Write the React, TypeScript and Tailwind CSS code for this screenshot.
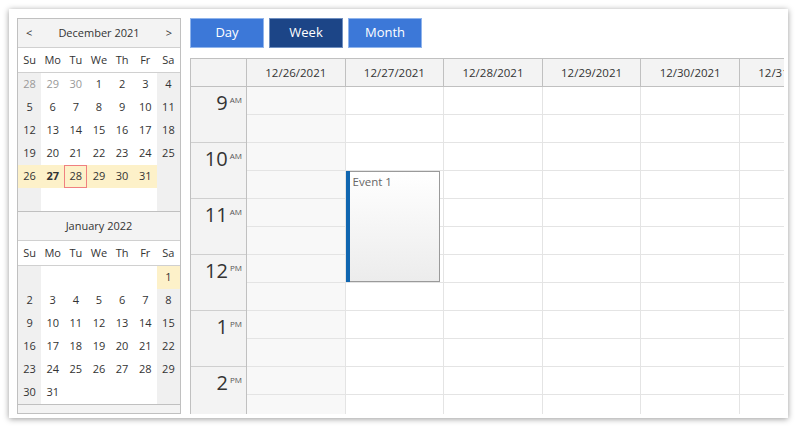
import React from 'react'

type Cell = { d: string; other?: boolean; sel?: boolean; bold?: boolean; today?: boolean }

const dayNames = ['Su', 'Mo', 'Tu', 'We', 'Th', 'Fr', 'Sa']

const december: Cell[][] = [
  [{ d: '28', other: true }, { d: '29', other: true }, { d: '30', other: true }, { d: '1' }, { d: '2' }, { d: '3' }, { d: '4' }],
  [{ d: '5' }, { d: '6' }, { d: '7' }, { d: '8' }, { d: '9' }, { d: '10' }, { d: '11' }],
  [{ d: '12' }, { d: '13' }, { d: '14' }, { d: '15' }, { d: '16' }, { d: '17' }, { d: '18' }],
  [{ d: '19' }, { d: '20' }, { d: '21' }, { d: '22' }, { d: '23' }, { d: '24' }, { d: '25' }],
  [
    { d: '26', sel: true },
    { d: '27', sel: true, bold: true },
    { d: '28', sel: true, today: true },
    { d: '29', sel: true },
    { d: '30', sel: true },
    { d: '31', sel: true },
    { d: '' },
  ],
  [{ d: '' }, { d: '' }, { d: '' }, { d: '' }, { d: '' }, { d: '' }, { d: '' }],
]

const january: Cell[][] = [
  [{ d: '' }, { d: '' }, { d: '' }, { d: '' }, { d: '' }, { d: '' }, { d: '1', sel: true }],
  [{ d: '2' }, { d: '3' }, { d: '4' }, { d: '5' }, { d: '6' }, { d: '7' }, { d: '8' }],
  [{ d: '9' }, { d: '10' }, { d: '11' }, { d: '12' }, { d: '13' }, { d: '14' }, { d: '15' }],
  [{ d: '16' }, { d: '17' }, { d: '18' }, { d: '19' }, { d: '20' }, { d: '21' }, { d: '22' }],
  [{ d: '23' }, { d: '24' }, { d: '25' }, { d: '26' }, { d: '27' }, { d: '28' }, { d: '29' }],
  [{ d: '30' }, { d: '31' }, { d: '' }, { d: '' }, { d: '' }, { d: '' }, { d: '' }],
]

const columns = ['12/26/2021', '12/27/2021', '12/28/2021', '12/29/2021', '12/30/2021', '12/31/2021']

const hours: [string, string][] = [
  ['9', 'AM'],
  ['10', 'AM'],
  ['11', 'AM'],
  ['12', 'PM'],
  ['1', 'PM'],
  ['2', 'PM'],
]

function Month({ title, rows, arrows }: { title: string; rows: Cell[][]; arrows?: boolean }) {
  return (
    <div className="border-b border-[#c0c0c0] bg-white">
      <div className="h-[29px] flex items-center justify-between px-[8px] bg-[#f3f3f3] border-b border-[#d0d0d0] text-[#333]">
        <span className="w-[10px]">{arrows ? '<' : ''}</span>
        <span>{title}</span>
        <span className="w-[10px] text-right">{arrows ? '>' : ''}</span>
      </div>
      <div className="grid grid-cols-7 h-[25px] border-b border-[#d0d0d0] items-center text-center text-[#333]">
        {dayNames.map((n) => (
          <div key={n}>{n}</div>
        ))}
      </div>
      {rows.map((row, ri) => (
        <div key={ri} className="grid grid-cols-7">
          {row.map((c, ci) => {
            const weekend = ci === 0 || ci === 6
            const bg = c.sel ? 'bg-[#fdf1c9]' : weekend ? 'bg-[#f0f0f0]' : 'bg-white'
            return (
              <div
                key={ci}
                className={`h-[23px] flex items-center justify-center ${bg} ${c.other ? 'text-[#999]' : 'text-[#333]'} ${c.bold ? 'font-bold' : ''} ${c.today ? 'border border-[#f08080]' : ''}`}
              >
                {c.d}
              </div>
            )
          })}
        </div>
      ))}
    </div>
  )
}

export default function App() {
  return (
    <div className="w-[798px] h-[428px] bg-white pt-[9px] pl-[9px] font-['Open_Sans',sans-serif]">
      <div className="w-[779px] h-[409px] bg-white shadow-[0_1px_6px_rgba(0,0,0,0.4)] flex gap-[9px] pt-[9px] pl-[8px] pr-[4px] pb-[4px]">
        {/* navigator */}
        <div className="w-[164px] h-full shrink-0 border border-[#c0c0c0] bg-[#f3f3f3] overflow-hidden text-[11px]">
          <Month title="December 2021" rows={december} arrows />
          <Month title="January 2022" rows={january} />
        </div>

        {/* scheduler */}
        <div className="w-[594px] h-full flex flex-col overflow-hidden">
          <div className="flex gap-[5px] h-[30px] shrink-0 text-[13px] text-white">
            <div className="w-[74px] flex items-center justify-center bg-[#3c78d8] border border-[#8fb4ec]">Day</div>
            <div className="w-[74px] flex items-center justify-center bg-[#1c4587] border border-[#6f8fc0]">Week</div>
            <div className="w-[74px] flex items-center justify-center bg-[#3c78d8] border border-[#8fb4ec]">Month</div>
          </div>

          <div className="mt-[10px] flex-1 overflow-hidden border-l border-t border-[#c0c0c0] text-[11.5px] text-[#333]">
            <div className="flex h-[28px] bg-[#f3f3f3] border-b border-[#c0c0c0] w-max">
              <div className="w-[56px] shrink-0 border-r border-[#c0c0c0]" />
              {columns.map((c) => (
                <div key={c} className="w-[98.6px] shrink-0 border-r border-[#c0c0c0] flex items-center justify-center">
                  {c}
                </div>
              ))}
            </div>

            <div className="flex w-max">
              <div className="w-[56px] shrink-0 border-r border-[#c0c0c0] bg-[#f3f3f3]">
                {hours.map(([h, ap]) => (
                  <div key={h} className="h-[56px] border-b border-[#cfcfcf] flex justify-end items-start pt-[4px] pr-[4px] text-[#333]">
                    <span className="text-[20px] leading-[24px]">{h}</span>
                    <span className="text-[8px] leading-none mt-[5px] ml-[2px] text-[#555]">{ap}</span>
                  </div>
                ))}
              </div>

              {columns.map((c, ci) => (
                <div key={c} className={`relative w-[98.6px] shrink-0 border-r border-[#e4e4e4] ${ci === 0 ? 'bg-[#f8f8f8]' : 'bg-white'}`}>
                  {Array.from({ length: 12 }).map((_, i) => (
                    <div key={i} className="h-[28px] border-b border-[#e4e4e4]" />
                  ))}
                  {ci === 1 && (
                    <div className="absolute left-0 top-[84px] w-[94px] h-[111px] border border-[#9a9a9a] bg-gradient-to-b from-white to-[#ececec] flex">
                      <div className="w-[4px] -ml-px -my-px bg-[#1066b0]" />
                      <div className="pl-[3px] pt-[3px] text-[#666] leading-[14px]">Event 1</div>
                    </div>
                  )}
                </div>
              ))}
            </div>
          </div>
        </div>
      </div>
    </div>
  )
}
